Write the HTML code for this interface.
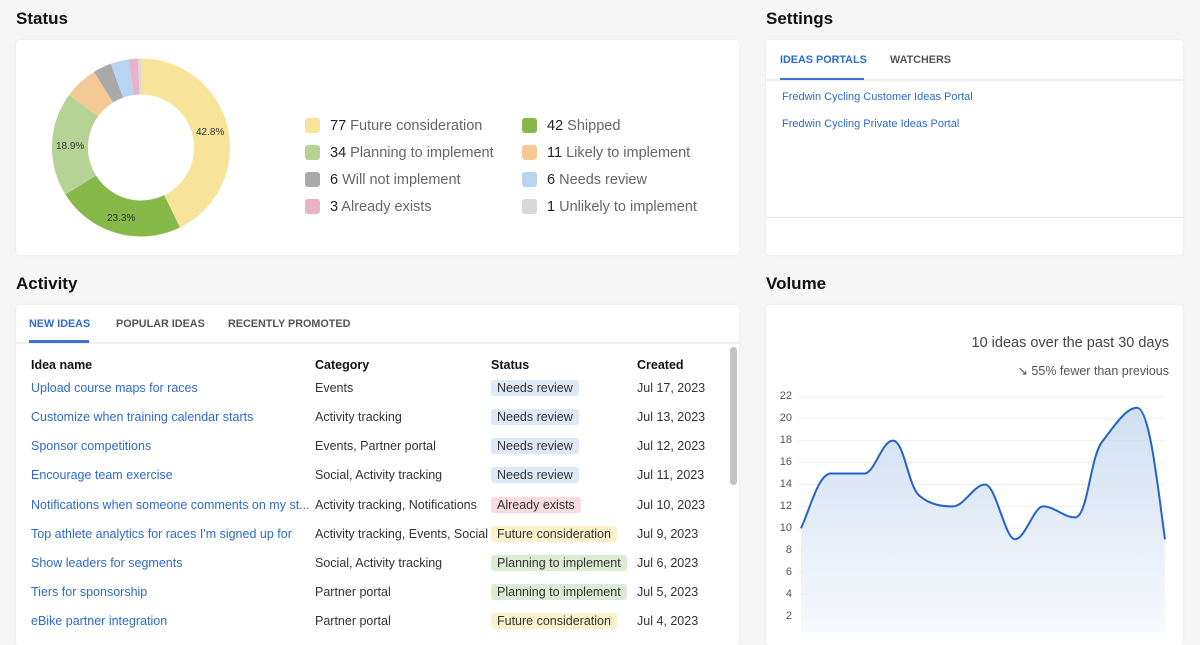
<!DOCTYPE html>
<html><head><meta charset="utf-8"><style>
*{box-sizing:border-box;margin:0;padding:0}
body{width:1200px;height:632px;overflow:hidden;background:#f6f6f6;font-family:"Liberation Sans",sans-serif;color:#222;position:relative}
.h{position:absolute;font-size:17px;font-weight:bold;color:#111}
.card{position:absolute;background:#fff;border-radius:4px;box-shadow:0 0 2px rgba(0,0,0,.08)}
.lg{position:absolute;font-size:14.5px;color:#666;white-space:nowrap}
.lg b{font-weight:normal;color:#222}
.lg i{position:absolute;left:-25px;top:0;width:15px;height:15px;border-radius:3px}
.tab{position:absolute;font-size:10.8px;font-weight:bold;color:#555}
.tab.a{color:#2f6bc9}
.a2{position:absolute;font-size:11px;color:#2f6bc9}
.td{position:absolute;font-size:12.5px;white-space:nowrap;color:#333}
.lk{color:#2f6bc9}
.th{font-weight:bold;color:#111}
.bd{padding:1px 6px;border-radius:3px;color:#333}
.nr{background:#dde9f7}.ae{background:#f7dde3}.fc{background:#fbf2cc}.pi{background:#dcebd3}
.yl{position:absolute;left:768px;width:24px;text-align:right;font-size:11px;color:#555}
</style></head><body>
<div class="h" style="left:16px;top:9px">Status</div>
<div class="h" style="left:766px;top:9px">Settings</div>
<div class="h" style="left:16px;top:274px">Activity</div>
<div class="h" style="left:766px;top:274px">Volume</div>

<div class="card" style="left:16px;top:40px;width:723px;height:215px"></div>
<svg style="position:absolute;left:0;top:0" width="300" height="260">
<g transform="rotate(-90 141 147.5)" fill="none" stroke-width="36">
<circle cx="141" cy="147.5" r="71" stroke="#f7e49a" stroke-dasharray="190.84 500" stroke-dashoffset="0"/>
<circle cx="141" cy="147.5" r="71" stroke="#87b84a" stroke-dasharray="104.10 500" stroke-dashoffset="-190.84"/>
<circle cx="141" cy="147.5" r="71" stroke="#b5d395" stroke-dasharray="84.27 500" stroke-dashoffset="-294.94"/>
<circle cx="141" cy="147.5" r="71" stroke="#f4c995" stroke-dasharray="27.26 500" stroke-dashoffset="-379.21"/>
<circle cx="141" cy="147.5" r="71" stroke="#a9a9a9" stroke-dasharray="14.87 500" stroke-dashoffset="-406.47"/>
<circle cx="141" cy="147.5" r="71" stroke="#b9d4f2" stroke-dasharray="14.87 500" stroke-dashoffset="-421.34"/>
<circle cx="141" cy="147.5" r="71" stroke="#e8b3c6" stroke-dasharray="7.44 500" stroke-dashoffset="-436.21"/>
<circle cx="141" cy="147.5" r="71" stroke="#d8d8d8" stroke-dasharray="2.48 500" stroke-dashoffset="-443.65"/>
</g>
<g font-family="Liberation Sans" font-size="10" fill="#333">
<text x="196" y="135">42.8%</text><text x="107" y="221">23.3%</text><text x="56" y="149">18.9%</text>
</g>
</svg>
<div class="lg" style="left:330px;top:118px"><i style="background:#f7e49a"></i><b>77</b> Future consideration</div>
<div class="lg" style="left:330px;top:145px"><i style="background:#b5d395"></i><b>34</b> Planning to implement</div>
<div class="lg" style="left:330px;top:172px"><i style="background:#a9a9a9"></i><b>6</b> Will not implement</div>
<div class="lg" style="left:330px;top:199px"><i style="background:#e8b3c6"></i><b>3</b> Already exists</div>
<div class="lg" style="left:547px;top:118px"><i style="background:#87b84a"></i><b>42</b> Shipped</div>
<div class="lg" style="left:547px;top:145px"><i style="background:#f4c995"></i><b>11</b> Likely to implement</div>
<div class="lg" style="left:547px;top:172px"><i style="background:#b9d4f2"></i><b>6</b> Needs review</div>
<div class="lg" style="left:547px;top:199px"><i style="background:#d8d8d8"></i><b>1</b> Unlikely to implement</div>

<div class="card" style="left:766px;top:40px;width:417px;height:215px">
<div style="position:absolute;left:0;right:0;top:39px;height:2px;background:#eee"></div>
<div style="position:absolute;left:14px;width:84px;top:38px;height:2px;background:#3b73d1"></div>
<div style="position:absolute;left:0;right:0;top:177px;height:1px;background:#e6e6e6"></div>
</div>
<div class="tab a" style="left:780px;top:54px">IDEAS PORTALS</div>
<div class="tab" style="left:890px;top:54px">WATCHERS</div>
<div class="a2" style="left:782px;top:91px">Fredwin Cycling Customer Ideas Portal</div>
<div class="a2" style="left:782px;top:118px">Fredwin Cycling Private Ideas Portal</div>

<div class="card" style="left:16px;top:305px;width:723px;height:340px">
<div style="position:absolute;left:0;right:0;top:37px;height:2px;background:#eee"></div>
<div style="position:absolute;left:13px;width:60px;top:35px;height:3px;background:#3b73d1"></div>
<div style="position:absolute;left:714px;top:42px;width:7px;height:138px;border-radius:4px;background:#c4c4c4"></div>
</div>
<div class="tab a" style="left:29px;top:318px">NEW IDEAS</div>
<div class="tab" style="left:116px;top:318px">POPULAR IDEAS</div>
<div class="tab" style="left:228px;top:318px">RECENTLY PROMOTED</div>

<div class="td th" style="left:31px;top:358px">Idea name</div>
<div class="td th" style="left:315px;top:358px">Category</div>
<div class="td th" style="left:491px;top:358px">Status</div>
<div class="td th" style="left:637px;top:358px">Created</div>

<div class="td lk" style="left:31px;top:381px">Upload course maps for races</div><div class="td" style="left:315px;top:381px">Events</div><div class="td" style="left:491px;top:381px"><span class="bd nr">Needs review</span></div><div class="td" style="left:637px;top:381px">Jul 17, 2023</div>
<div class="td lk" style="left:31px;top:410px">Customize when training calendar starts</div><div class="td" style="left:315px;top:410px">Activity tracking</div><div class="td" style="left:491px;top:410px"><span class="bd nr">Needs review</span></div><div class="td" style="left:637px;top:410px">Jul 13, 2023</div>
<div class="td lk" style="left:31px;top:439px">Sponsor competitions</div><div class="td" style="left:315px;top:439px">Events, Partner portal</div><div class="td" style="left:491px;top:439px"><span class="bd nr">Needs review</span></div><div class="td" style="left:637px;top:439px">Jul 12, 2023</div>
<div class="td lk" style="left:31px;top:468px">Encourage team exercise</div><div class="td" style="left:315px;top:468px">Social, Activity tracking</div><div class="td" style="left:491px;top:468px"><span class="bd nr">Needs review</span></div><div class="td" style="left:637px;top:468px">Jul 11, 2023</div>
<div class="td lk" style="left:31px;top:498px">Notifications when someone comments on my st...</div><div class="td" style="left:315px;top:498px">Activity tracking, Notifications</div><div class="td" style="left:491px;top:498px"><span class="bd ae">Already exists</span></div><div class="td" style="left:637px;top:498px">Jul 10, 2023</div>
<div class="td lk" style="left:31px;top:527px">Top athlete analytics for races I'm signed up for</div><div class="td" style="left:315px;top:527px">Activity tracking, Events, Social</div><div class="td" style="left:491px;top:527px"><span class="bd fc">Future consideration</span></div><div class="td" style="left:637px;top:527px">Jul 9, 2023</div>
<div class="td lk" style="left:31px;top:556px">Show leaders for segments</div><div class="td" style="left:315px;top:556px">Social, Activity tracking</div><div class="td" style="left:491px;top:556px"><span class="bd pi">Planning to implement</span></div><div class="td" style="left:637px;top:556px">Jul 6, 2023</div>
<div class="td lk" style="left:31px;top:585px">Tiers for sponsorship</div><div class="td" style="left:315px;top:585px">Partner portal</div><div class="td" style="left:491px;top:585px"><span class="bd pi">Planning to implement</span></div><div class="td" style="left:637px;top:585px">Jul 5, 2023</div>
<div class="td lk" style="left:31px;top:614px">eBike partner integration</div><div class="td" style="left:315px;top:614px">Partner portal</div><div class="td" style="left:491px;top:614px"><span class="bd fc">Future consideration</span></div><div class="td" style="left:637px;top:614px">Jul 4, 2023</div>

<div class="card" style="left:766px;top:305px;width:417px;height:340px"></div>
<div style="position:absolute;right:31px;top:335px;font-size:14.5px;color:#444">10 ideas over the past 30 days</div>
<div style="position:absolute;right:31px;top:363px;font-size:12.5px;color:#555">↘ 55% fewer than previous</div>
<div class="yl" style="top:390px">22</div><div class="yl" style="top:412px">20</div><div class="yl" style="top:434px">18</div><div class="yl" style="top:456px">16</div><div class="yl" style="top:478px">14</div><div class="yl" style="top:500px">12</div><div class="yl" style="top:522px">10</div><div class="yl" style="top:544px">8</div><div class="yl" style="top:566px">6</div><div class="yl" style="top:588px">4</div><div class="yl" style="top:610px">2</div>
<svg style="position:absolute;left:0;top:0" width="1200" height="632">
<defs><linearGradient id="g" x1="0" y1="0" x2="0" y2="1"><stop offset="0" stop-color="#c9daf0"/><stop offset="1" stop-color="#f6f9fd"/></linearGradient></defs>
<g stroke="#eef0f3" stroke-width="1">
<line x1="798" x2="1165" y1="396.7" y2="396.7"/><line x1="798" x2="1165" y1="418.6" y2="418.6"/><line x1="798" x2="1165" y1="440.6" y2="440.6"/><line x1="798" x2="1165" y1="462.5" y2="462.5"/><line x1="798" x2="1165" y1="484.5" y2="484.5"/><line x1="798" x2="1165" y1="506.4" y2="506.4"/><line x1="798" x2="1165" y1="528.3" y2="528.3"/><line x1="798" x2="1165" y1="550.2" y2="550.2"/><line x1="798" x2="1165" y1="572.1" y2="572.1"/><line x1="798" x2="1165" y1="594" y2="594"/><line x1="798" x2="1165" y1="616" y2="616"/>
</g>
<path d="M801,528.3 C811,506 818,476 830,473.5 C842,473.5 853,473.5 865,473.5 C875,472 882,440.6 893,440.6 C904,440.6 908,485 919,495.4 C930,505 942,506.4 953,506.4 C964,506.4 974,484.5 985,484.5 C996,484.5 1005,539.3 1015,539.3 C1025,539.3 1034,506.4 1043,506.4 C1054,506.4 1064,517.4 1075,517.4 C1088,517.4 1090,455 1103,440.6 C1115,425 1126,407.8 1137,407.8 C1150,407.8 1158,490 1165,539.3 L1165,632 L801,632 Z" fill="url(#g)" opacity=".85"/>
<path d="M801,528.3 C811,506 818,476 830,473.5 C842,473.5 853,473.5 865,473.5 C875,472 882,440.6 893,440.6 C904,440.6 908,485 919,495.4 C930,505 942,506.4 953,506.4 C964,506.4 974,484.5 985,484.5 C996,484.5 1005,539.3 1015,539.3 C1025,539.3 1034,506.4 1043,506.4 C1054,506.4 1064,517.4 1075,517.4 C1088,517.4 1090,455 1103,440.6 C1115,425 1126,407.8 1137,407.8 C1150,407.8 1158,490 1165,539.3" fill="none" stroke="#2563c9" stroke-width="2"/>
</svg>
</body></html>
